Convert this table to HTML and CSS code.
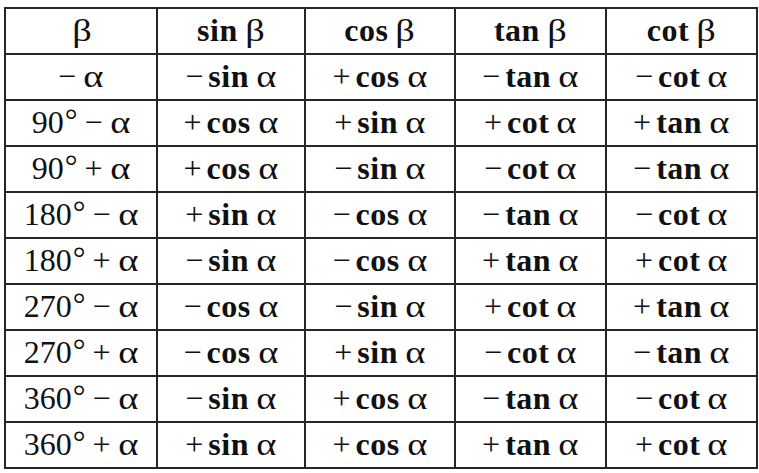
FILE: index.html
```html
<!DOCTYPE html>
<html>
<head>
<meta charset="utf-8">
<link rel="stylesheet" href="styles.css">
</head>
<body>
<table class="trig">
<colgroup>
<col class="c1"><col class="c2"><col class="c3"><col class="c4"><col class="c5">
</colgroup>
<tr><td><span class="g">β</span></td><td><b>sin</b> <span class="g">β</span></td><td><b>cos</b> <span class="g">β</span></td><td><b>tan</b> <span class="g">β</span></td><td><b>cot</b> <span class="g">β</span></td></tr>
<tr><td>− <span class="g">α</span></td><td>− <b>sin</b> <span class="g">α</span></td><td>+ <b>cos</b> <span class="g">α</span></td><td>− <b>tan</b> <span class="g">α</span></td><td>− <b>cot</b> <span class="g">α</span></td></tr>
<tr><td>90<span class="deg">°</span> − <span class="g">α</span></td><td>+ <b>cos</b> <span class="g">α</span></td><td>+ <b>sin</b> <span class="g">α</span></td><td>+ <b>cot</b> <span class="g">α</span></td><td>+ <b>tan</b> <span class="g">α</span></td></tr>
<tr><td>90<span class="deg">°</span> + <span class="g">α</span></td><td>+ <b>cos</b> <span class="g">α</span></td><td>− <b>sin</b> <span class="g">α</span></td><td>− <b>cot</b> <span class="g">α</span></td><td>− <b>tan</b> <span class="g">α</span></td></tr>
<tr><td>180<span class="deg">°</span> − <span class="g">α</span></td><td>+ <b>sin</b> <span class="g">α</span></td><td>− <b>cos</b> <span class="g">α</span></td><td>− <b>tan</b> <span class="g">α</span></td><td>− <b>cot</b> <span class="g">α</span></td></tr>
<tr><td>180<span class="deg">°</span> + <span class="g">α</span></td><td>− <b>sin</b> <span class="g">α</span></td><td>− <b>cos</b> <span class="g">α</span></td><td>+ <b>tan</b> <span class="g">α</span></td><td>+ <b>cot</b> <span class="g">α</span></td></tr>
<tr><td>270<span class="deg">°</span> − <span class="g">α</span></td><td>− <b>cos</b> <span class="g">α</span></td><td>− <b>sin</b> <span class="g">α</span></td><td>+ <b>cot</b> <span class="g">α</span></td><td>+ <b>tan</b> <span class="g">α</span></td></tr>
<tr><td>270<span class="deg">°</span> + <span class="g">α</span></td><td>− <b>cos</b> <span class="g">α</span></td><td>+ <b>sin</b> <span class="g">α</span></td><td>− <b>cot</b> <span class="g">α</span></td><td>− <b>tan</b> <span class="g">α</span></td></tr>
<tr><td>360<span class="deg">°</span> − <span class="g">α</span></td><td>− <b>sin</b> <span class="g">α</span></td><td>+ <b>cos</b> <span class="g">α</span></td><td>− <b>tan</b> <span class="g">α</span></td><td>− <b>cot</b> <span class="g">α</span></td></tr>
<tr><td>360<span class="deg">°</span> + <span class="g">α</span></td><td>+ <b>sin</b> <span class="g">α</span></td><td>+ <b>cos</b> <span class="g">α</span></td><td>+ <b>tan</b> <span class="g">α</span></td><td>+ <b>cot</b> <span class="g">α</span></td></tr>
</table>
</body>
</html>
```
FILE: styles.css
```css
html, body {
  margin: 0;
  padding: 0;
  background: #ffffff;
}
body {
  padding: 7px 0 0 4px;
  font-family: "Liberation Serif", "DejaVu Serif", serif;
  color: #111111;
}
.trig {
  border-collapse: collapse;
  table-layout: fixed;
  width: 752px;
}
.c1 { width: 152px; }
.c2 { width: 148px; }
.c3 { width: 150px; }
.c4 { width: 151px; }
.c5 { width: 151px; }
.trig td {
  border: 2px solid #262626;
  height: 42px;
  padding: 0 0 2px 0;
  text-align: center;
  vertical-align: middle;
  font-size: 32px;
  line-height: 34px;
  white-space: nowrap;
  word-spacing: -3px;
}
.trig b {
  font-weight: bold;
  letter-spacing: 0.5px;
}
.g {
  font-weight: normal;
  display: inline-block;
  transform: scaleX(1.2);
  margin: 0 2px 0 4px;
}
.deg {
  font-size: 32px;
  position: relative;
  top: -2px;
  margin: 0 2px 0 1px;
}
```
